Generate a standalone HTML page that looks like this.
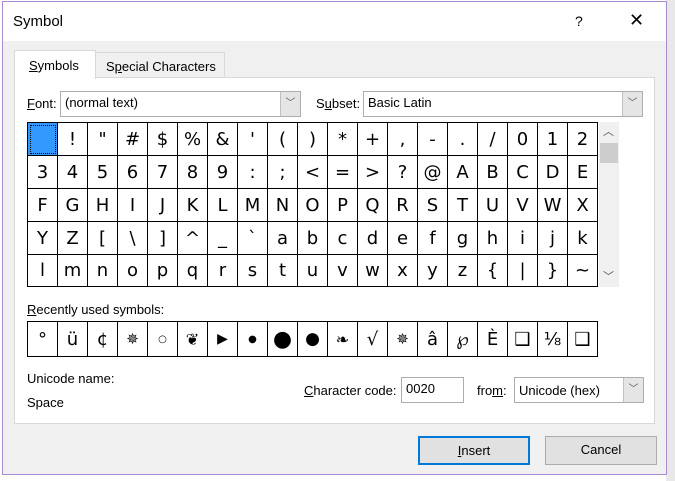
<!DOCTYPE html>
<html><head><meta charset="utf-8"><style>
*{box-sizing:border-box;margin:0;padding:0}
body{width:675px;height:481px;overflow:hidden;background:#fff;font-family:"Liberation Sans","DejaVu Sans",sans-serif;font-size:13px;color:#000;position:relative}
.a{position:absolute}
.dlg{left:2px;top:1px;width:665px;height:474px;border:1px solid #a98bd1;background:#f0f0f0}
.title{left:0;top:0;width:663px;height:39px;background:#fff}
.u{text-decoration:underline}
.grid{border-collapse:collapse;position:absolute}
.grid td{border:1px solid #000;width:30px;text-align:center;font-size:18px;padding:0;font-family:"DejaVu Sans",sans-serif}
.combo{background:#fff;border:1px solid #adadad;font-size:13px;padding:3px 4px}
.dd{position:absolute;right:0;top:0;width:20px;height:100%;background:#e5e5e5;border-left:1px solid #c0c0c0;font-size:10px;text-align:center;color:#555}
.btn{border:1px solid #adadad;background:#e1e1e1;text-align:center;line-height:26px;font-size:13px}
</style></head><body>
<div class="a" style="left:666px;top:0;width:9px;height:481px;background:#e8e8e8"></div>
<div class="a dlg">
<div class="a title"></div>
<div class="a" style="left:10px;top:11px;font-size:15px">Symbol</div>
<div class="a" style="left:572px;top:11px;font-size:14px">?</div>
<div class="a" style="left:626px;top:8px;font-size:18px">✕</div>
<div class="a" style="left:11px;top:75px;width:641px;height:347px;background:#fff;border:1px solid #d9d9d9"></div>
<div class="a" style="left:92px;top:50px;width:130px;height:26px;background:#f0f0f0;border:1px solid #d9d9d9;font-size:13px;padding:6px 0 0 10px">S<span class="u">p</span>ecial Characters</div>
<div class="a" style="left:11px;top:48px;width:82px;height:29px;background:#fff;border:1px solid #d9d9d9;border-bottom:none;font-size:13px;padding:7px 0 0 14px"><span class="u">S</span>ymbols</div>
<div class="a" style="left:24px;top:94px"><span class="u">F</span>ont:</div>
<div class="a combo" style="left:57px;top:89px;width:241px;height:26px">(normal text)<div class="dd" style="line-height:24px">﹀</div></div>
<div class="a" style="left:313px;top:94px">S<span class="u">u</span>bset:</div>
<div class="a combo" style="left:360px;top:89px;width:280px;height:26px">Basic Latin<div class="dd" style="line-height:24px">﹀</div></div>
<table class="grid" style="left:24px;top:120px">
<tr style="height:33px"><td style="background:#3399ff;outline:1px dotted #000;outline-offset:-3px"></td><td>!</td><td>"</td><td>#</td><td>$</td><td>%</td><td>&amp;</td><td>'</td><td>(</td><td>)</td><td>*</td><td>+</td><td>,</td><td>-</td><td>.</td><td>/</td><td>0</td><td>1</td><td>2</td></tr>
<tr style="height:33px"><td>3</td><td>4</td><td>5</td><td>6</td><td>7</td><td>8</td><td>9</td><td>:</td><td>;</td><td>&lt;</td><td>=</td><td>&gt;</td><td>?</td><td>@</td><td>A</td><td>B</td><td>C</td><td>D</td><td>E</td></tr>
<tr style="height:33px"><td>F</td><td>G</td><td>H</td><td>I</td><td>J</td><td>K</td><td>L</td><td>M</td><td>N</td><td>O</td><td>P</td><td>Q</td><td>R</td><td>S</td><td>T</td><td>U</td><td>V</td><td>W</td><td>X</td></tr>
<tr style="height:33px"><td>Y</td><td>Z</td><td>[</td><td>\</td><td>]</td><td>^</td><td>_</td><td>`</td><td>a</td><td>b</td><td>c</td><td>d</td><td>e</td><td>f</td><td>g</td><td>h</td><td>i</td><td>j</td><td>k</td></tr>
<tr style="height:32px"><td>l</td><td>m</td><td>n</td><td>o</td><td>p</td><td>q</td><td>r</td><td>s</td><td>t</td><td>u</td><td>v</td><td>w</td><td>x</td><td>y</td><td>z</td><td>{</td><td>|</td><td>}</td><td>~</td></tr>
</table>
<div class="a" style="left:596px;top:120px;width:20px;height:165px;background:#f0f0f0"></div>
<div class="a" style="left:597px;top:141px;width:18px;height:20px;background:#cdcdcd"></div>
<div class="a" style="left:600px;top:121px;font-size:11px;color:#555">︿</div>
<div class="a" style="left:600px;top:266px;font-size:11px;color:#555">﹀</div>
<div class="a" style="left:24px;top:300px"><span class="u">R</span>ecently used symbols:</div>
<table class="grid" style="left:24px;top:319px;border:1px solid #888">
<tr style="height:35px"><td>°</td><td>ü</td><td>¢</td><td style="font-size:15px">✵</td><td style="font-size:10px">○</td><td style="font-size:16px">❦</td><td style="font-size:14px">▶</td><td style="font-size:10px">●</td><td style="font-size:22px">●</td><td style="font-size:17px">●</td><td style="font-size:16px">❧</td><td>√</td><td style="font-size:15px">✵</td><td>â</td><td>℘</td><td>È</td><td>❑</td><td>⅛</td><td>❑</td></tr>
</table>
<div class="a" style="left:24px;top:369px">Unicode name:</div>
<div class="a" style="left:24px;top:393px">Space</div>
<div class="a" style="left:301px;top:381px"><span class="u">C</span>haracter code:</div>
<div class="a combo" style="left:398px;top:375px;width:63px;height:26px">0020</div>
<div class="a" style="left:474px;top:381px">fro<span class="u">m</span>:</div>
<div class="a combo" style="left:511px;top:375px;width:130px;height:26px;padding-top:5px">Unicode (hex)<div class="dd" style="line-height:24px">﹀</div></div>
<div class="a btn" style="left:415px;top:434px;width:112px;height:29px;border:2px solid #0078d7"><span class="u">I</span>nsert</div>
<div class="a btn" style="left:542px;top:434px;width:112px;height:29px">Cancel</div>
</div>
</body></html>
